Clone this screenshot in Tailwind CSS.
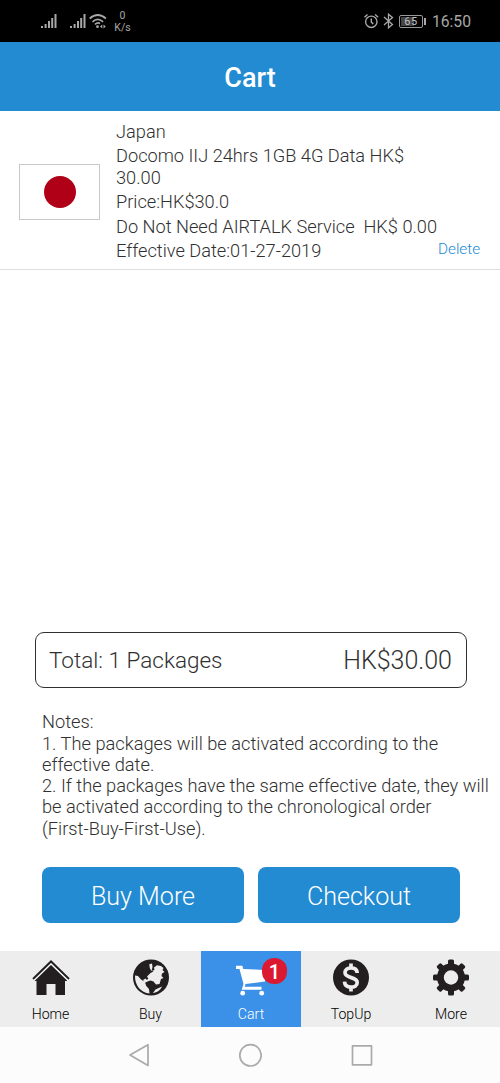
<!DOCTYPE html>
<html lang="en">
<head>
<meta charset="utf-8">
<title>Cart</title>
<script src="https://cdn.jsdelivr.net/npm/@tailwindcss/browser@4"></script>
</head>
<body class="w-[500px] h-[1083px] overflow-hidden bg-white font-['Roboto',sans-serif] font-light text-[#303030] flex flex-col">
  <div class="h-[42px] shrink-0 bg-black flex items-center justify-between pl-[40px] pr-[29px] text-[#a8a8a8]">
    <div class="flex items-center">
      <svg class="w-[17px] h-[15px]" viewBox="0 0 17 15" fill="currentColor"><path d="M1 12h2v2H1zM4.600 10h2v4h-2zM8 7h2v7H8zM11.200 4h2v10h-2zM14.500 0h2v14h-2z"/></svg>
      <svg class="ml-[12px] w-[17px] h-[15px]" viewBox="0 0 17 15" fill="currentColor"><path d="M1 12h2v2H1zM4.600 10h2v4h-2zM8 7h2v7H8zM11.200 4h2v10h-2zM14.500 0h2v14h-2z"/></svg>
      <svg class="ml-[3px] w-[18px] h-[15px]" viewBox="0 0 18 15" fill="none" stroke="currentColor" stroke-width="1.700"><path d="M.7 4.500Q8.700-2.500 16.900 4.500M3.500 7.800Q8.700 3 14.100 7.800M6 10.300Q8.700 7.800 11 9.500"/><circle cx="8.500" cy="12.700" r="1.400" fill="currentColor" stroke="none"/><path d="M13.300 10.500v4L11 12.500zM14.500 10.500v4l2.300-2z" fill="currentColor" stroke="none"/></svg>
      <div class="ml-[7px] w-[17px] text-center text-[10.500px] leading-[12px] font-normal pt-[1px]"><div>0</div><div>K/s</div></div>
    </div>
    <div class="flex items-center">
      <svg class="w-[16px] h-[16px]" viewBox="0 0 16 16" fill="none" stroke="currentColor" stroke-width="1.400"><circle cx="8.300" cy="8.800" r="5.700"/><path d="M8.300 5.400v3.700l2 2M1.500 4.300 4.500 1.500M15.100 4.300l-3-2.800"/></svg>
      <svg class="ml-[4px] w-[11px] h-[16px]" viewBox="0 0 11 16" fill="none" stroke="currentColor" stroke-width="1.300"><path d="M1 4l8.500 7.500-4 3.300V1.200l4 3.300L1 12"/></svg>
      <div class="ml-[5px] w-[24px] h-[13px] rounded-[2px] border border-[#999] p-[1px] flex">
        <div class="w-full bg-linear-to-r from-[#444] from-65% to-black to-65% text-[11px] leading-[9px] text-center font-normal tracking-[0.500px] text-[#c0c0c0]">65</div>
      </div>
      <div class="ml-[1px] w-[2px] h-[7px] bg-[#a8a8a8]"></div>
      <div class="ml-[6px] text-[15.700px] leading-[20px] font-normal pt-[2px]">16:50</div>
    </div>
  </div>

  <header class="h-[69px] shrink-0 bg-[#238bd2] flex items-center justify-center text-white text-[27px] font-medium pt-[4px]">Cart</header>

  <section class="h-[159px] shrink-0 border-b border-[#dedede] flex">
    <div class="ml-[19px] mt-[53px] w-[81px] h-[56px] border border-[#c8c8c8] flex items-center justify-center">
      <div class="size-[32px] rounded-full bg-[#b00018]"></div>
    </div>
    <div class="ml-[16px] pt-[10px] flex flex-col gap-[3.200px] text-[18.220px] leading-[21.300px] whitespace-nowrap">
      <div>Japan</div>
      <div>Docomo IIJ 24hrs 1GB 4G Data HK$<br>30.00</div>
      <div>Price:HK$30.0</div>
      <div>Do Not Need AIRTALK Service&nbsp; HK$ 0.00</div>
      <div class="flex items-center"><span class="w-[322px]">Effective Date:01-27-2019</span><span class="text-[15.300px] text-[#238bd2] -mt-[2px]">Delete</span></div>
    </div>
  </section>

  <main class="flex-1 flex flex-col justify-end">
    <div class="ml-[35px] w-[432px] h-[56px] rounded-[9px] border border-[#303030] flex items-center justify-between pl-[13px] pr-[14px] pt-[2px]">
      <span class="text-[22.500px]">Total: 1 Packages</span>
      <span class="text-[25px]">HK$30.00</span>
    </div>
    <div class="ml-[42px] mt-[23px] text-[18.250px] leading-[21.300px] whitespace-nowrap">
      <div>Notes:</div>
      <div>1. The packages will be activated according to the<br>effective date.</div>
      <div>2. If the packages have the same effective date, they will<br>be activated according to the chronological order<br>(First-Buy-First-Use).</div>
    </div>
    <div class="ml-[42px] mt-[28px] mb-[28px] flex gap-[14px] text-white text-[25.100px]">
      <button class="w-[202px] h-[56px] rounded-[8px] bg-[#238bd2] pt-[3px]">Buy More</button>
      <button class="w-[202px] h-[56px] rounded-[8px] bg-[#238bd2] pt-[3px]">Checkout</button>
    </div>
  </main>

  <nav class="h-[76px] shrink-0 bg-[#ededed] grid grid-cols-5 text-black text-[14.100px] leading-[17px] text-center">
    <div class="flex flex-col items-center pt-[8px] pl-[1px]">
      <svg class="w-[38px] h-[38px]" viewBox="0 0 38 38"><path d="M19 4.500 35 20v2h-2v14H23.500V25h-9v11H4.500V22H2.500v-2z" fill="#231f20"/><path d="M1 20 19 2.500 37 20" fill="none" stroke="#231f20" stroke-width="2"/><path d="M2 21.500 19 5l17 16.500" fill="none" stroke="#fff" stroke-width="1.200"/></svg>
      <div class="mt-[9px]">Home</div>
    </div>
    <div class="flex flex-col items-center pt-[8px] pl-[1px]">
      <svg class="w-[38px] h-[38px]" viewBox="0 0 38 38"><circle cx="19" cy="18.500" r="18" fill="#231f20"/><path d="M17.300 5.200 20 4.500 20.500 8 19.500 12 22.500 11 22 8.500 25 6.300 29 7 31.500 9 30.500 11 32.500 13 30 14.500 29.500 17 31.500 19 29 20 27.500 25 24 25.500 21.500 22.500 18.500 21.500 15.500 22.500 13 24 11 21 13.500 19.500 15 21 16.300 19.500 15 17.500 18.500 14 21.500 12.500 19 11.500 17.800 9z" fill="#ededed"/><path d="M3 16.500 6 17 9 20.500 13 23 14.500 27 17 30 17.500 34.500C9 34 2.500 26 3 16.500zM21 34 23.500 30.500 30 27.500C28.500 31 25 33.500 21 34z" fill="#ededed"/><path d="M13.500 23.500 18 22.500 23 26 21.500 29.500 18.500 33.500 17 29.500 14 26.500z" fill="#231f20"/></svg>
      <div class="mt-[9px]">Buy</div>
    </div>
    <div class="relative bg-[#3b91e8] text-white flex flex-col items-center pt-[8px] ml-[1px] -mr-[1px]">
      <svg class="w-[38px] h-[38px]" viewBox="0 0 38 38" fill="#fff"><path d="M4 6.700h6.300L11.300 10 33 11v11.500L13.500 25l-.8 2.700H29.500v3H9.700l1.800-5.700L7.500 10H4z"/><circle cx="10.700" cy="34.200" r="2.400"/><circle cx="29.700" cy="34.200" r="2.400"/></svg>
      <div class="mt-[9px]">Cart</div>
      <div class="absolute left-[61px] top-[7px] w-[25px] h-[26px] rounded-[12px] bg-[#db1a32] text-[20px] leading-[28px] font-medium">1</div>
    </div>
    <div class="flex flex-col items-center pt-[8px] pl-[2px]">
      <svg class="w-[38px] h-[38px]" viewBox="0 0 38 38"><circle cx="19" cy="18.500" r="18" fill="#231f20"/><path d="M25.200 14C25 10.500 22.500 8.800 19 8.800s-6 1.900-6 4.800c0 6.500 12.200 3.500 12.200 9.800 0 3-2.600 4.800-6.200 4.800-3.800 0-6.300-2-6.500-5.500M19 4.500V9M19 28v4.500" fill="none" stroke="#ededed" stroke-width="3.700"/></svg>
      <div class="mt-[9px]">TopUp</div>
    </div>
    <div class="flex flex-col items-center pt-[8px] pl-[2px]">
      <svg class="w-[38px] h-[38px]" viewBox="-19 -18.500 38 38"><g fill="#231f20"><circle r="14"/><rect x="-3" y="-18" width="6" height="36" rx="1.500"/><rect x="-3" y="-18" width="6" height="36" rx="1.500" transform="rotate(45)"/><rect x="-3" y="-18" width="6" height="36" rx="1.500" transform="rotate(90)"/><rect x="-3" y="-18" width="6" height="36" rx="1.500" transform="rotate(135)"/></g><circle r="7.200" fill="#ededed"/></svg>
      <div class="mt-[9px]">More</div>
    </div>
  </nav>

  <div class="h-[56px] shrink-0 bg-[#fcfcfc] flex items-center pl-[128px] gap-[88px]">
    <svg class="w-[22px] h-[24px]" viewBox="0 0 22 24" fill="none" stroke="#aaa" stroke-width="1.700" stroke-linejoin="round"><path d="M20 1.700v20.800L2 12z"/></svg>
    <svg class="w-[24px] h-[24px]" viewBox="0 0 24 24" fill="none" stroke="#aaa" stroke-width="1.700"><circle cx="12.500" cy="12.300" r="10.700"/></svg>
    <svg class="w-[24px] h-[24px]" viewBox="0 0 24 24" fill="none" stroke="#aaa" stroke-width="1.700" stroke-linejoin="round"><path d="M2.500 2.800h19v19h-19z"/></svg>
  </div>
</body>
</html>
